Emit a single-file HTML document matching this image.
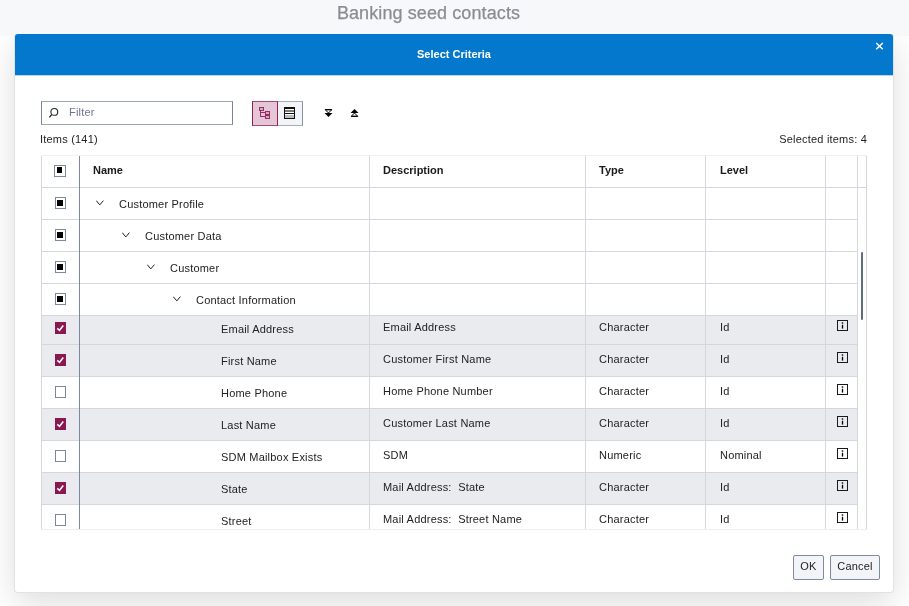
<!DOCTYPE html>
<html><head><meta charset="utf-8"><style>
*{box-sizing:border-box;margin:0;padding:0}
html,body{width:909px;height:606px;overflow:hidden;background:#fff;font-family:"Liberation Sans",sans-serif;color:#1f1f1f}
div,svg{position:absolute}
.t{font-size:11px;letter-spacing:0.2px;line-height:13px;white-space:nowrap;color:#222}
.b{font-size:11px;font-weight:bold;line-height:13px;white-space:nowrap;color:#1a1a1a}
.vl{width:1px;background:#d4d8de}
.hl{height:1px;background:#d4d8de}
.cb{width:11px;height:12px;border:1px solid #7b889d;background:#fff}
.cb.p::after{content:"";position:absolute;left:2px;top:1px;width:5px;height:6px;background:#000}
.cb.p2::after{content:"";position:absolute;left:1px;top:2px;width:6px;height:6px;background:#000}
.cb.on{background:#8b1751;border-color:#8b1751}
.sel{background:#e9ebef}
.info{width:12px;height:12px;border:1px solid #222;border-radius:1px}
.btn{height:25px;background:#f3f4f7;border:1px solid #7d8aa0;border-radius:2px;font-size:11px;line-height:20px;text-align:center;color:#222;letter-spacing:0.2px}
</style></head><body><div style="left:0;top:0;width:909px;height:606px;will-change:transform">
<div style="left:15px;top:34px;width:878px;height:558px;background:#fff;border-radius:3px;box-shadow:0 0 0 1px #dfe2e7,0 10px 32px rgba(0,0,0,0.14)"></div>
<div style="left:15px;top:34px;width:878px;height:41px;background:#0378cd;border-radius:3px 3px 0 0"></div>
<div style="left:15px;top:75px;width:878px;height:1px;background:#b5d5f0"></div>
<div class="b" style="left:15px;top:48px;width:878px;text-align:center;color:#fff">Select Criteria</div>
<svg style="left:875px;top:41px" width="9" height="10" viewBox="0 0 9 10"><path d="M1.2 2L7.8 8.2M7.8 2L1.2 8.2" stroke="#fff" stroke-width="1.5"/></svg>
<div style="left:0;top:0;width:909px;height:34px;background:#f7f8fa"></div>
<div style="left:0;top:34px;width:14px;height:2px;background:#f7f8fa"></div>
<div style="left:894px;top:34px;width:15px;height:2px;background:#f7f8fa"></div>
<div style="left:0;top:2px;width:857px;text-align:center;font-size:18px;line-height:22px;color:#8a8c91;letter-spacing:0.1px;-webkit-text-stroke:0.25px #8a8c91;white-space:nowrap">Banking seed contacts</div>
<div style="left:41px;top:101px;width:192px;height:24px;border:1px solid;border-color:#9ca6b5 #77849a #9ca6b5 #77849a;background:#fff"></div>
<svg style="left:48px;top:106px" width="12" height="13" viewBox="0 0 12 13"><circle cx="6.3" cy="5.9" r="3.4" fill="none" stroke="#222" stroke-width="1.1"/><path d="M3.9 8.4L1.4 11.4" stroke="#222" stroke-width="1.4"/></svg>
<div class="t" style="left:69px;top:106px;color:#6b7890">Filter</div>
<div style="left:252px;top:101px;width:26px;height:25px;background:#e4c6d6;border:1px solid;border-color:#a9487a #8f1f58"></div>
<div style="left:278px;top:101px;width:25px;height:25px;background:#f3f4f7;border:1px solid;border-color:#a3adbb #8592a6;border-left:none"></div>
<svg style="left:255px;top:104px" width="20" height="18" viewBox="0 0 20 18" fill="none" stroke="#9b2b67" stroke-width="1"><rect x="4.5" y="3.5" width="4" height="3" fill="#d9a9c1"/><path d="M5.5 7V13M5.5 8.5H10.5M5.5 12.5H10.5" /><rect x="10.5" y="7.5" width="4" height="3" fill="#d9a9c1"/><rect x="10.5" y="11.5" width="4" height="3" fill="#d9a9c1"/></svg>
<svg style="left:280px;top:104px" width="20" height="18" viewBox="0 0 20 18" shape-rendering="crispEdges"><rect x="4" y="3" width="11" height="12" fill="#111"/><rect x="5" y="5" width="9" height="1" fill="#fff"/><rect x="5" y="6" width="9" height="2" fill="#7a7a7a"/><rect x="5" y="8" width="9" height="1" fill="#fff"/><rect x="5" y="10" width="9" height="1" fill="#fff"/><rect x="5" y="11" width="9" height="3" fill="#bdbdbd"/></svg>
<svg style="left:324px;top:108px" width="9" height="10" viewBox="0 0 9 10"><path d="M1.3 1.7H7.7L4.5 5Z" fill="none" stroke="#000" stroke-width="1" stroke-linejoin="bevel"/><path d="M1 1.2H8V2.2H1Z" fill="#000"/><path d="M0.5 5H8.5L4.5 9Z" fill="#000"/></svg>
<svg style="left:350px;top:108px" width="9" height="10" viewBox="0 0 9 10"><path d="M0.5 5H8.5L4.5 1Z" fill="#000"/><path d="M1.3 8.3H7.7L4.5 5Z" fill="none" stroke="#000" stroke-width="1" stroke-linejoin="bevel"/><path d="M1 7.8H8V8.8H1Z" fill="#000"/></svg>
<div class="t" style="left:40px;top:133px">Items (141)</div>
<div class="t" style="left:700px;top:133px;width:167px;text-align:right">Selected items: 4</div>
<div class="vl" style="left:41px;top:155px;height:375px"></div>
<div class="vl" style="left:866px;top:155px;height:375px"></div>
<div class="hl" style="left:41px;top:155px;width:826px;background:#eceef1"></div>
<div class="hl" style="left:41px;top:529px;width:826px;background:#eceef1"></div>
<div class="cb p" style="left:54px;top:165px;width:12px"></div>
<div class="b" style="left:93px;top:164px">Name</div>
<div class="b" style="left:383px;top:164px">Description</div>
<div class="b" style="left:599px;top:164px">Type</div>
<div class="b" style="left:720px;top:164px">Level</div>
<div class="hl" style="left:41px;top:187px;width:825px"></div>
<div class="hl" style="left:41px;top:219px;width:816px"></div>
<div class="hl" style="left:41px;top:251px;width:816px"></div>
<div class="hl" style="left:41px;top:283px;width:816px"></div>
<div class="hl" style="left:41px;top:315px;width:816px"></div>
<div class="hl" style="left:41px;top:344px;width:816px"></div>
<div class="hl" style="left:41px;top:376px;width:816px"></div>
<div class="hl" style="left:41px;top:408px;width:816px"></div>
<div class="hl" style="left:41px;top:440px;width:816px"></div>
<div class="hl" style="left:41px;top:472px;width:816px"></div>
<div class="hl" style="left:41px;top:504px;width:816px"></div>
<div class="cb p2" style="left:55px;top:197px"></div>
<svg style="left:96px;top:200px" width="9" height="7" viewBox="0 0 9 7"><path d="M0.2 0.6L3.8 4.9L7.4 0.6" fill="none" stroke="#222" stroke-width="1"/></svg>
<div class="t" style="left:119px;top:198px">Customer Profile</div>
<div class="cb p2" style="left:55px;top:229px"></div>
<svg style="left:122px;top:232px" width="9" height="7" viewBox="0 0 9 7"><path d="M0.2 0.6L3.8 4.9L7.4 0.6" fill="none" stroke="#222" stroke-width="1"/></svg>
<div class="t" style="left:145px;top:230px">Customer Data</div>
<div class="cb p2" style="left:55px;top:261px"></div>
<svg style="left:147px;top:264px" width="9" height="7" viewBox="0 0 9 7"><path d="M0.2 0.6L3.8 4.9L7.4 0.6" fill="none" stroke="#222" stroke-width="1"/></svg>
<div class="t" style="left:170px;top:262px">Customer</div>
<div class="cb p2" style="left:55px;top:293px"></div>
<svg style="left:173px;top:296px" width="9" height="7" viewBox="0 0 9 7"><path d="M0.2 0.6L3.8 4.9L7.4 0.6" fill="none" stroke="#222" stroke-width="1"/></svg>
<div class="t" style="left:196px;top:294px">Contact Information</div>
<div class="sel" style="left:42px;top:316px;width:815px;height:28px"></div>
<svg style="left:55px;top:322px" width="11" height="12" viewBox="0 0 11 12"><rect width="11" height="12" fill="#8b1751"/><path d="M2.3 6.3L4.5 8.4L8.2 3.6" fill="none" stroke="#fff" stroke-width="1.6"/></svg>
<div class="t" style="left:221px;top:323px">Email Address</div>
<div class="t" style="left:383px;top:321px">Email Address</div>
<div class="t" style="left:599px;top:321px">Character</div>
<div class="t" style="left:720px;top:321px">Id</div>
<svg style="left:837px;top:320px" width="11" height="11" viewBox="0 0 11 11"><rect x="0.5" y="0.5" width="10" height="10" fill="none" stroke="#1a1a1a" stroke-width="1"/><circle cx="5.5" cy="3" r="0.85" fill="#000"/><path d="M5.5 4.8V8.6" stroke="#000" stroke-width="1.3"/></svg>
<div class="sel" style="left:42px;top:345px;width:815px;height:31px"></div>
<svg style="left:55px;top:354px" width="11" height="12" viewBox="0 0 11 12"><rect width="11" height="12" fill="#8b1751"/><path d="M2.3 6.3L4.5 8.4L8.2 3.6" fill="none" stroke="#fff" stroke-width="1.6"/></svg>
<div class="t" style="left:221px;top:355px">First Name</div>
<div class="t" style="left:383px;top:353px">Customer First Name</div>
<div class="t" style="left:599px;top:353px">Character</div>
<div class="t" style="left:720px;top:353px">Id</div>
<svg style="left:837px;top:352px" width="11" height="11" viewBox="0 0 11 11"><rect x="0.5" y="0.5" width="10" height="10" fill="none" stroke="#1a1a1a" stroke-width="1"/><circle cx="5.5" cy="3" r="0.85" fill="#000"/><path d="M5.5 4.8V8.6" stroke="#000" stroke-width="1.3"/></svg>
<div class="cb" style="left:55px;top:386px"></div>
<div class="t" style="left:221px;top:387px">Home Phone</div>
<div class="t" style="left:383px;top:385px">Home Phone Number</div>
<div class="t" style="left:599px;top:385px">Character</div>
<div class="t" style="left:720px;top:385px">Id</div>
<svg style="left:837px;top:384px" width="11" height="11" viewBox="0 0 11 11"><rect x="0.5" y="0.5" width="10" height="10" fill="none" stroke="#1a1a1a" stroke-width="1"/><circle cx="5.5" cy="3" r="0.85" fill="#000"/><path d="M5.5 4.8V8.6" stroke="#000" stroke-width="1.3"/></svg>
<div class="sel" style="left:42px;top:409px;width:815px;height:31px"></div>
<svg style="left:55px;top:418px" width="11" height="12" viewBox="0 0 11 12"><rect width="11" height="12" fill="#8b1751"/><path d="M2.3 6.3L4.5 8.4L8.2 3.6" fill="none" stroke="#fff" stroke-width="1.6"/></svg>
<div class="t" style="left:221px;top:419px">Last Name</div>
<div class="t" style="left:383px;top:417px">Customer Last Name</div>
<div class="t" style="left:599px;top:417px">Character</div>
<div class="t" style="left:720px;top:417px">Id</div>
<svg style="left:837px;top:416px" width="11" height="11" viewBox="0 0 11 11"><rect x="0.5" y="0.5" width="10" height="10" fill="none" stroke="#1a1a1a" stroke-width="1"/><circle cx="5.5" cy="3" r="0.85" fill="#000"/><path d="M5.5 4.8V8.6" stroke="#000" stroke-width="1.3"/></svg>
<div class="cb" style="left:55px;top:450px"></div>
<div class="t" style="left:221px;top:451px">SDM Mailbox Exists</div>
<div class="t" style="left:383px;top:449px">SDM</div>
<div class="t" style="left:599px;top:449px">Numeric</div>
<div class="t" style="left:720px;top:449px">Nominal</div>
<svg style="left:837px;top:448px" width="11" height="11" viewBox="0 0 11 11"><rect x="0.5" y="0.5" width="10" height="10" fill="none" stroke="#1a1a1a" stroke-width="1"/><circle cx="5.5" cy="3" r="0.85" fill="#000"/><path d="M5.5 4.8V8.6" stroke="#000" stroke-width="1.3"/></svg>
<div class="sel" style="left:42px;top:473px;width:815px;height:31px"></div>
<svg style="left:55px;top:482px" width="11" height="12" viewBox="0 0 11 12"><rect width="11" height="12" fill="#8b1751"/><path d="M2.3 6.3L4.5 8.4L8.2 3.6" fill="none" stroke="#fff" stroke-width="1.6"/></svg>
<div class="t" style="left:221px;top:483px">State</div>
<div class="t" style="left:383px;top:481px">Mail Address:&nbsp; State</div>
<div class="t" style="left:599px;top:481px">Character</div>
<div class="t" style="left:720px;top:481px">Id</div>
<svg style="left:837px;top:480px" width="11" height="11" viewBox="0 0 11 11"><rect x="0.5" y="0.5" width="10" height="10" fill="none" stroke="#1a1a1a" stroke-width="1"/><circle cx="5.5" cy="3" r="0.85" fill="#000"/><path d="M5.5 4.8V8.6" stroke="#000" stroke-width="1.3"/></svg>
<div class="cb" style="left:55px;top:514px"></div>
<div class="t" style="left:221px;top:515px">Street</div>
<div class="t" style="left:383px;top:513px">Mail Address:&nbsp; Street Name</div>
<div class="t" style="left:599px;top:513px">Character</div>
<div class="t" style="left:720px;top:513px">Id</div>
<svg style="left:837px;top:512px" width="11" height="11" viewBox="0 0 11 11"><rect x="0.5" y="0.5" width="10" height="10" fill="none" stroke="#1a1a1a" stroke-width="1"/><circle cx="5.5" cy="3" r="0.85" fill="#000"/><path d="M5.5 4.8V8.6" stroke="#000" stroke-width="1.3"/></svg>
<div class="vl" style="left:79px;top:156px;height:373px;background:#7b889d"></div>
<div class="vl" style="left:369px;top:156px;height:373px"></div>
<div class="vl" style="left:585px;top:156px;height:373px"></div>
<div class="vl" style="left:705px;top:156px;height:373px"></div>
<div class="vl" style="left:825px;top:156px;height:373px"></div>
<div class="vl" style="left:857px;top:156px;height:373px"></div>
<div style="left:861px;top:252px;width:2px;height:68px;background:#5f6d84;border-radius:1px"></div>
<div class="btn" style="left:793px;top:555px;width:31px">OK</div>
<div class="btn" style="left:830px;top:555px;width:50px">Cancel</div>
</div></body></html>
